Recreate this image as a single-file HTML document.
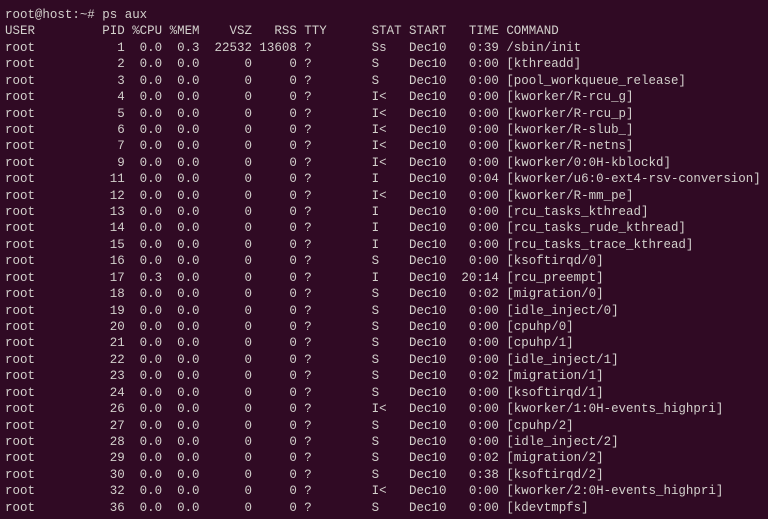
<!DOCTYPE html>
<html><head><meta charset="utf-8"><style>
html,body{margin:0;padding:0;background:#300a24;width:768px;height:519px;overflow:hidden}
pre{margin:0;padding:7px 0 0 5px;font-family:"Liberation Mono",monospace;font-size:12.47px;line-height:16.42px;color:#d3d0cc;white-space:pre}
</style></head><body><pre>root@host:~# ps aux
USER         PID %CPU %MEM    VSZ   RSS TTY      STAT START   TIME COMMAND
root           1  0.0  0.3  22532 13608 ?        Ss   Dec10   0:39 /sbin/init
root           2  0.0  0.0      0     0 ?        S    Dec10   0:00 [kthreadd]
root           3  0.0  0.0      0     0 ?        S    Dec10   0:00 [pool_workqueue_release]
root           4  0.0  0.0      0     0 ?        I&lt;   Dec10   0:00 [kworker/R-rcu_g]
root           5  0.0  0.0      0     0 ?        I&lt;   Dec10   0:00 [kworker/R-rcu_p]
root           6  0.0  0.0      0     0 ?        I&lt;   Dec10   0:00 [kworker/R-slub_]
root           7  0.0  0.0      0     0 ?        I&lt;   Dec10   0:00 [kworker/R-netns]
root           9  0.0  0.0      0     0 ?        I&lt;   Dec10   0:00 [kworker/0:0H-kblockd]
root          11  0.0  0.0      0     0 ?        I    Dec10   0:04 [kworker/u6:0-ext4-rsv-conversion]
root          12  0.0  0.0      0     0 ?        I&lt;   Dec10   0:00 [kworker/R-mm_pe]
root          13  0.0  0.0      0     0 ?        I    Dec10   0:00 [rcu_tasks_kthread]
root          14  0.0  0.0      0     0 ?        I    Dec10   0:00 [rcu_tasks_rude_kthread]
root          15  0.0  0.0      0     0 ?        I    Dec10   0:00 [rcu_tasks_trace_kthread]
root          16  0.0  0.0      0     0 ?        S    Dec10   0:00 [ksoftirqd/0]
root          17  0.3  0.0      0     0 ?        I    Dec10  20:14 [rcu_preempt]
root          18  0.0  0.0      0     0 ?        S    Dec10   0:02 [migration/0]
root          19  0.0  0.0      0     0 ?        S    Dec10   0:00 [idle_inject/0]
root          20  0.0  0.0      0     0 ?        S    Dec10   0:00 [cpuhp/0]
root          21  0.0  0.0      0     0 ?        S    Dec10   0:00 [cpuhp/1]
root          22  0.0  0.0      0     0 ?        S    Dec10   0:00 [idle_inject/1]
root          23  0.0  0.0      0     0 ?        S    Dec10   0:02 [migration/1]
root          24  0.0  0.0      0     0 ?        S    Dec10   0:00 [ksoftirqd/1]
root          26  0.0  0.0      0     0 ?        I&lt;   Dec10   0:00 [kworker/1:0H-events_highpri]
root          27  0.0  0.0      0     0 ?        S    Dec10   0:00 [cpuhp/2]
root          28  0.0  0.0      0     0 ?        S    Dec10   0:00 [idle_inject/2]
root          29  0.0  0.0      0     0 ?        S    Dec10   0:02 [migration/2]
root          30  0.0  0.0      0     0 ?        S    Dec10   0:38 [ksoftirqd/2]
root          32  0.0  0.0      0     0 ?        I&lt;   Dec10   0:00 [kworker/2:0H-events_highpri]
root          36  0.0  0.0      0     0 ?        S    Dec10   0:00 [kdevtmpfs]</pre></body></html>
